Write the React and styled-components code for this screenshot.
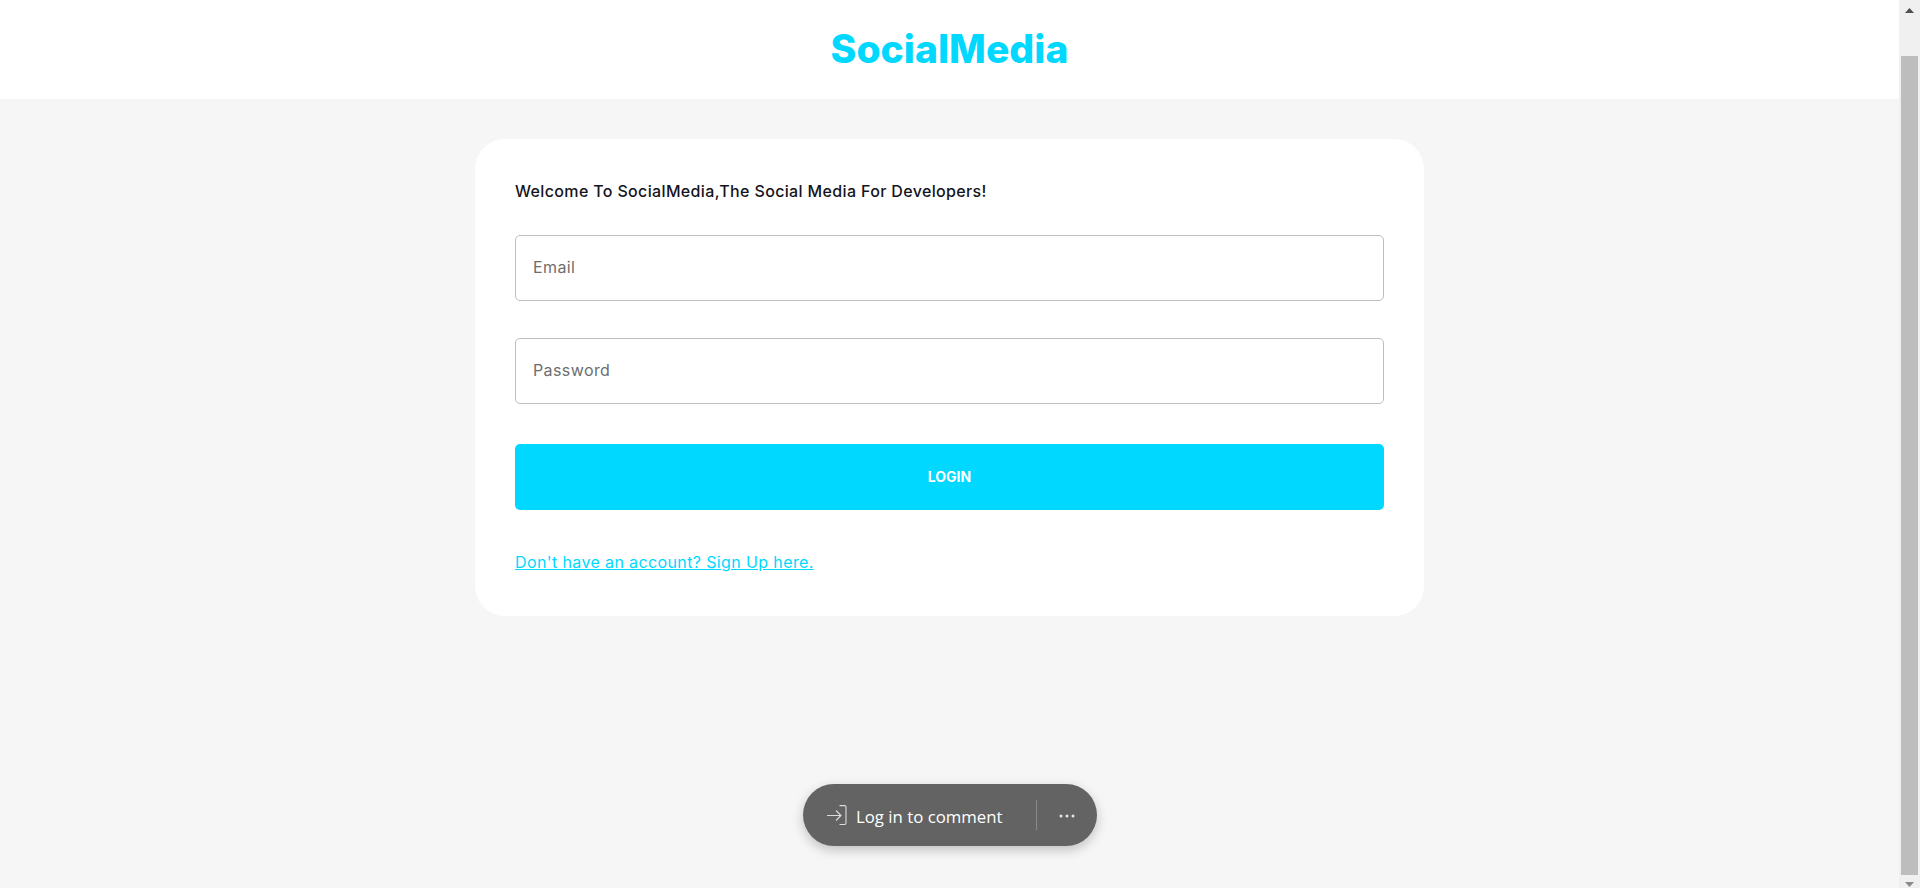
import React from "react";
import styled, { createGlobalStyle } from "styled-components";

const COLORS = {
  cyan: "#00d8ff",
  page: "#f6f6f6",
  ink: "#141420",
  border: "#bdbdbd",
  placeholder: "#6e6e6e",
};

const GlobalStyle = createGlobalStyle`
  html, body {
    margin: 0;
    height: 100%;
    overflow: hidden;
  }

  body {
    font-family: "Inter", "Liberation Sans", sans-serif;
    background: ${COLORS.page};
  }

  * {
    box-sizing: border-box;
  }
`;

const Window = styled.div`
  display: flex;
  height: 888px;
`;

const Page = styled.div`
  position: relative;
  flex: 1;
  background: ${COLORS.page};
`;

const Header = styled.header`
  display: flex;
  align-items: center;
  justify-content: center;
  height: 99px;
  padding-bottom: 2px;
  background: #fff;
`;

const Logo = styled.h1`
  margin: 0;
  font-size: 39px;
  font-weight: 800;
  letter-spacing: 0.05px;
  color: ${COLORS.cyan};
`;

const Card = styled.main`
  display: flex;
  flex-direction: column;
  width: 949px;
  height: 477px;
  margin: 40px auto 0;
  padding: 40px;
  background: #fff;
  border-radius: 30px;
`;

const Welcome = styled.p`
  margin: 0 0 32px;
  font-size: 16px;
  line-height: 24px;
  font-weight: 500;
  letter-spacing: 0.35px;
  color: ${COLORS.ink};
`;

const Form = styled.form`
  display: flex;
  flex-direction: column;
  gap: 37px;
`;

const Field = styled.input`
  width: 100%;
  height: 66px;
  padding: 0 17px 2px;
  border: 1px solid ${COLORS.border};
  border-radius: 5px;
  outline: none;
  font-family: inherit;
  font-size: 16px;
  letter-spacing: 0.4px;
  color: ${COLORS.ink};

  &::placeholder {
    color: ${COLORS.placeholder};
    opacity: 1;
  }
`;

const Submit = styled.button`
  height: 66px;
  margin-top: 3px;
  padding-bottom: 2px;
  border: none;
  border-radius: 5px;
  background: ${COLORS.cyan};
  font-family: inherit;
  font-size: 14px;
  font-weight: 700;
  color: #fff;
`;

const SignUp = styled.a`
  margin-top: 40px;
  font-size: 16px;
  line-height: 24px;
  letter-spacing: 0.38px;
  color: ${COLORS.cyan};
  text-decoration: underline;
`;

const CommentPill = styled.div`
  position: absolute;
  left: 803px;
  top: 784px;
  display: flex;
  align-items: center;
  width: 294px;
  height: 62px;
  padding-left: 24px;
  border-radius: 31px;
  background: #636363;
  box-shadow: 0 4px 12px rgba(0, 0, 0, 0.22);
  color: #fff;
`;

const CommentLabel = styled.span`
  margin-left: 9px;
  padding-top: 3px;
  font-family: "Open Sans", "Liberation Sans", sans-serif;
  font-size: 16.8px;
  white-space: nowrap;
`;

const PillDivider = styled.span`
  width: 1px;
  height: 30px;
  margin: 0 22px 0 33px;
  background: #8a8a8a;
`;

const Scrollbar = styled.div`
  display: flex;
  flex-direction: column;
  align-items: center;
  flex: none;
  width: 21px;
  height: 100%;
  background: #f0f0f0;
`;

const ScrollArrow = styled.svg`
  display: block;
  flex: none;
  width: 9px;
  height: 5px;
  margin: ${(p) => p.$margin};
  fill: ${(p) => p.$color};
`;

const ScrollThumb = styled.div`
  flex: none;
  width: 17px;
  height: 819px;
  margin-top: 43px;
  background: #bdbdbd;
`;

const LoginIcon = () => (
  <svg width="20" height="20" viewBox="0 0 20 20" fill="none" stroke="#dcdcdc" strokeWidth="1.1">
    <path d="M0 10.5H13.5M9 5.5l5 5-5 5" />
    <path d="M12.5 0.6H17.5a1.5 1.5 0 0 1 1.5 1.5V18a1.5 1.5 0 0 1-1.5 1.5H12.5" />
  </svg>
);

const MoreIcon = () => (
  <svg width="16" height="6" viewBox="0 0 16 6" fill="#e6e6e6">
    <circle cx="2" cy="4" r="1.5" />
    <circle cx="8" cy="4" r="1.5" />
    <circle cx="14" cy="4" r="1.5" />
  </svg>
);

export default function App() {
  return (
    <Window>
      <GlobalStyle />
      <Page>
        <Header>
          <Logo>SocialMedia</Logo>
        </Header>
        <Card>
          <Welcome>Welcome To SocialMedia,The Social Media For Developers!</Welcome>
          <Form onSubmit={(e) => e.preventDefault()}>
            <Field type="email" placeholder="Email" />
            <Field type="password" placeholder="Password" />
            <Submit type="submit">LOGIN</Submit>
          </Form>
          <SignUp href="#">Don't have an account? Sign Up here.</SignUp>
        </Card>
        <CommentPill>
          <LoginIcon />
          <CommentLabel>Log in to comment</CommentLabel>
          <PillDivider />
          <MoreIcon />
        </CommentPill>
      </Page>
      <Scrollbar>
        <ScrollArrow viewBox="0 0 9 5" $margin="8px 0 0" $color="#505050">
          <path d="M4.5 0L9 5H0z" />
        </ScrollArrow>
        <ScrollThumb />
        <ScrollArrow viewBox="0 0 9 5" $margin="7px 0 0" $color="#8a8a8a">
          <path d="M0 0H9L4.5 5z" />
        </ScrollArrow>
      </Scrollbar>
    </Window>
  );
}
